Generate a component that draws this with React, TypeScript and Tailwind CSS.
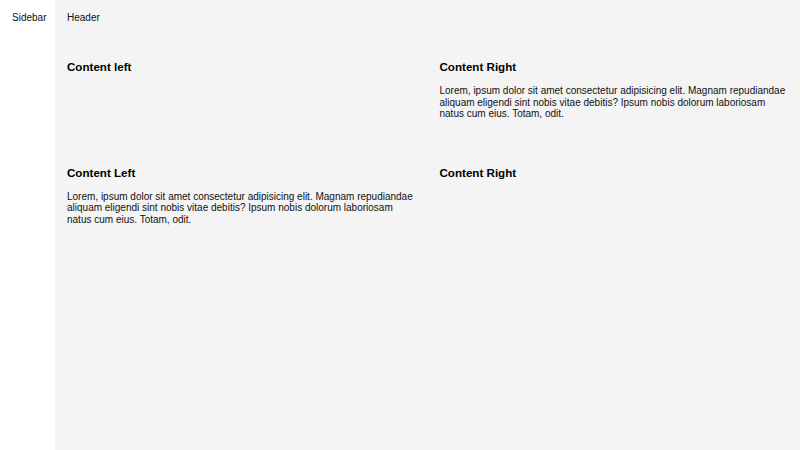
const lorem =
  "Lorem, ipsum dolor sit amet consectetur adipisicing elit. Magnam repudiandae aliquam eligendi sint nobis vitae debitis? Ipsum nobis dolorum laboriosam natus cum eius. Totam, odit.";

function Block({ title, text }: { title: string; text?: string }) {
  return (
    <section className="flex flex-col gap-[11px]">
      <h2 className="text-[11.6px] font-bold leading-[14px] text-black">{title}</h2>
      {text && <p className="text-[10px] leading-[11.5px] text-[#111]">{text}</p>}
    </section>
  );
}

export default function App() {
  return (
    <div className="flex h-[450px] w-[800px] font-['Liberation_Sans',Arial,sans-serif] text-[#111]">
      <aside className="w-[55px] shrink-0 bg-white px-3 pt-[12px] text-[10px] leading-[12px]">Sidebar</aside>
      <main className="flex flex-1 flex-col bg-[#f4f4f4] px-3 pt-[12px]">
        <header className="text-[10px] leading-[12px]">Header</header>
        <div className="mt-[36px] grid grid-cols-2 gap-x-6 gap-y-[46px]">
          <Block title="Content left" />
          <Block title="Content Right" text={lorem} />
          <Block title="Content Left" text={lorem} />
          <Block title="Content Right" />
        </div>
      </main>
    </div>
  );
}
